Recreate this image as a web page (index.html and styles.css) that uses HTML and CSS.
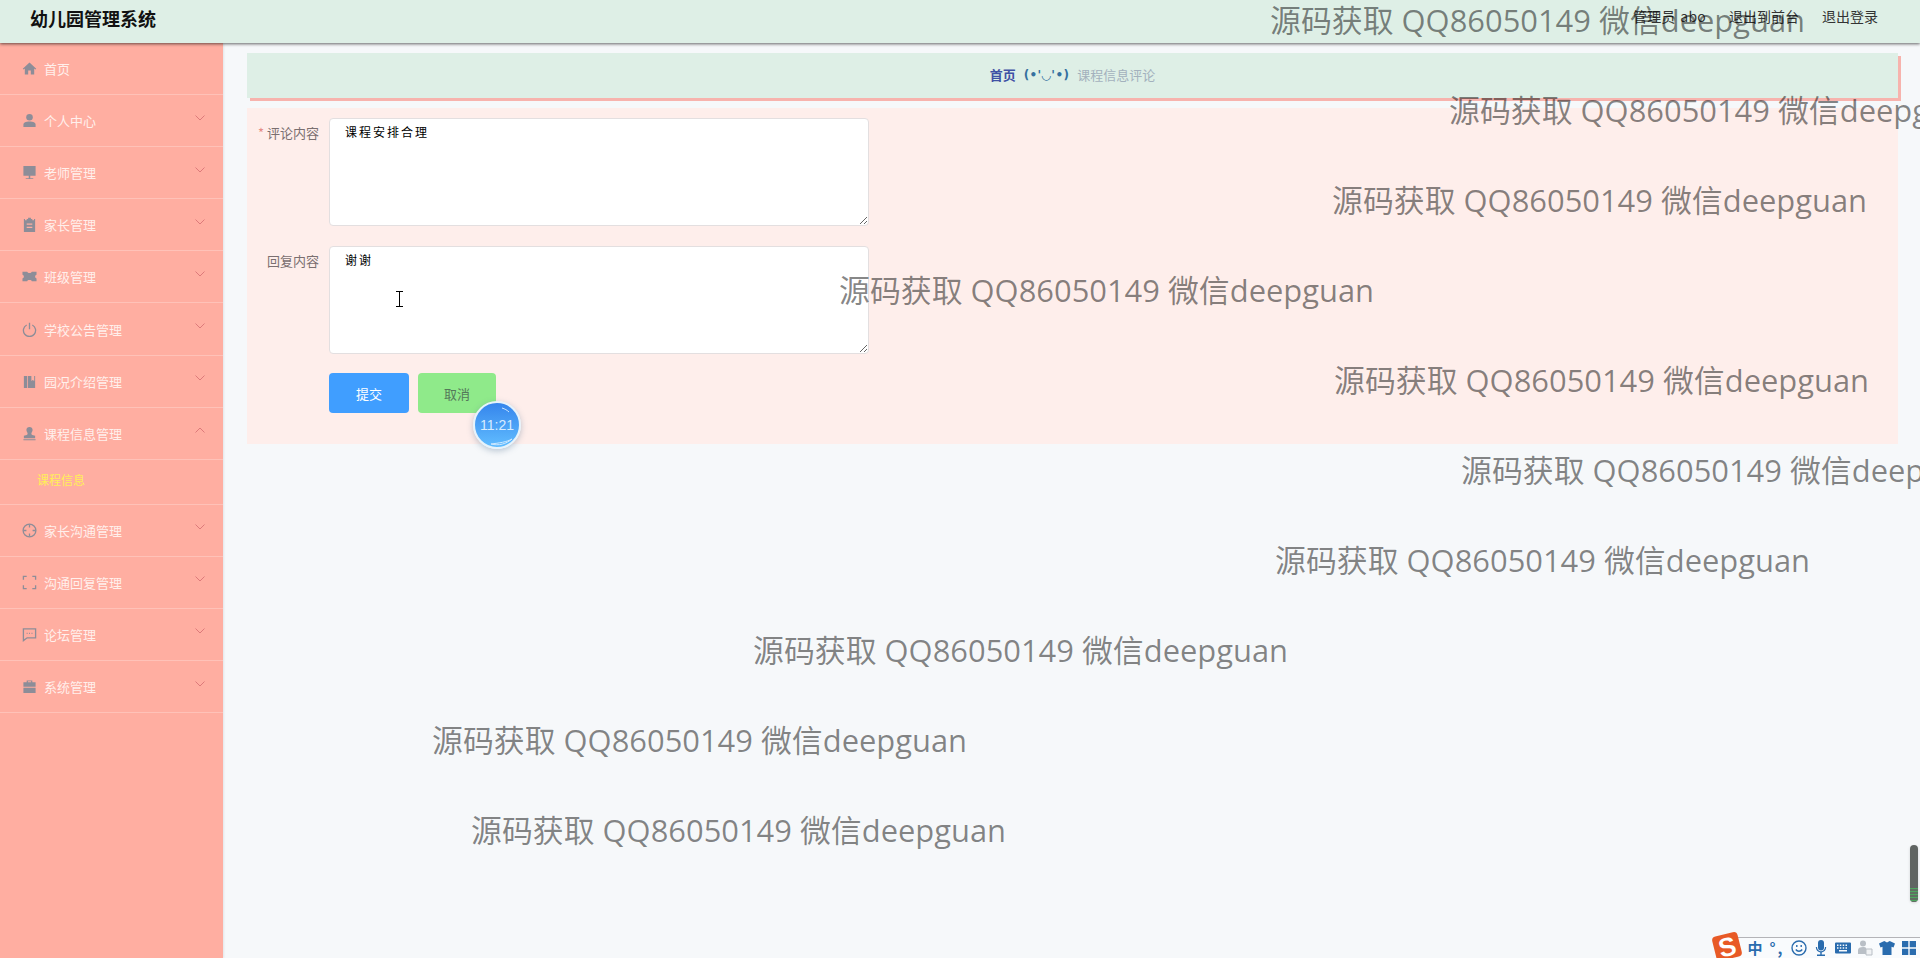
FILE: index.html
```html
<!DOCTYPE html>
<html lang="zh">
<head>
<meta charset="utf-8">
<title>幼儿园管理系统</title>
<link rel="stylesheet" href="styles.css">
</head>
<body>
<header class="topbar">
  <div class="brand">幼儿园管理系统</div>
  <nav class="topnav">
    <span class="topnav-user">管理员 abo</span>
    <span>退出到前台</span>
    <span>退出登录</span>
  </nav>
</header>
<div class="shell">
  <aside class="sidebar">
    <div class="item"><svg class="ico" viewBox="0 0 16 16"><path d="M8 1.5 .8 8.2l1 .9L3 8v6.5h3.6V10h2.8v4.500H13V8l1.200 1.100 1-.9z"/></svg><span>首页</span></div>
    <div class="item"><svg class="ico" viewBox="0 0 16 16"><circle cx="8" cy="4.600" r="3.500"/><path d="M1.500 15v-2.500C1.500 10 4 9 8 9s6.500 1 6.500 3.500V15z"/></svg><span>个人中心</span><svg class="chev" viewBox="0 0 10 6"><path d="M.5.500 5 5 9.500.500"/></svg></div>
    <div class="item"><svg class="ico" viewBox="0 0 16 16"><path d="M1.500 1h13v10.500h-13zM7.200 11.500h1.600V14H12v1H4v-1h3.200z"/></svg><span>老师管理</span><svg class="chev" viewBox="0 0 10 6"><path d="M.5.500 5 5 9.500.500"/></svg></div>
    <div class="item"><svg class="ico" viewBox="0 0 16 16"><path d="M5 2h1.500V.8h3V2H11v1.500h1.800V2H14v14H2V2h1.200v1.500H5zM5 7v1.300h6V7zm0 3.500v1.300h6v-1.300z" fill-rule="evenodd"/></svg><span>家长管理</span><svg class="chev" viewBox="0 0 10 6"><path d="M.5.500 5 5 9.500.500"/></svg></div>
    <div class="item"><svg class="ico" viewBox="0 0 16 16"><path d="M.5 3h5c.4.800.9 1.200 1.500 1.200h2c.6 0 1.100-.4 1.500-1.200h5v3c-1 .3-1.500 1-1.500 2s.5 1.700 1.500 2v3h-5c-.4-.8-.9-1.200-1.500-1.200H7c-.6 0-1.100.4-1.500 1.200h-5v-3c1-.3 1.500-1 1.500-2S1.500 6.300.5 6z"/></svg><span>班级管理</span><svg class="chev" viewBox="0 0 10 6"><path d="M.5.500 5 5 9.500.500"/></svg></div>
    <div class="item"><svg class="ico ico-line" viewBox="0 0 16 16"><path d="M5 3.200a6.500 6.500 0 1 0 6 0M8 .8v7"/></svg><span>学校公告管理</span><svg class="chev" viewBox="0 0 10 6"><path d="M.5.500 5 5 9.500.500"/></svg></div>
    <div class="item"><svg class="ico" viewBox="0 0 16 16"><path d="M2 2h3.500v13H2zM6.300 2H10v5.500l1.500-1 1.500 1V2h1v13H6.300z"/></svg><span>园况介绍管理</span><svg class="chev" viewBox="0 0 10 6"><path d="M.5.500 5 5 9.500.500"/></svg></div>
    <div class="item"><svg class="ico" viewBox="0 0 16 16"><path d="M8 1c2 0 3.300 1.400 3.300 3.200 0 1.800-1.300 2.500-1.300 4 0 .6.300 1 1 1.300l3 1V13H2v-2.500l3-1c.7-.3 1-.7 1-1.300 0-1.500-1.300-2.200-1.300-4C4.700 2.400 6 1 8 1zM1.500 14h13v1.300h-13z"/></svg><span>课程信息管理</span><svg class="chev" viewBox="0 0 10 6"><path d="M.5 5.500 5 1l4.500 4.500"/></svg></div>
    <div class="subitem"><span>课程信息</span></div>
    <div class="item"><svg class="ico ico-line" viewBox="0 0 16 16"><circle cx="8" cy="8" r="6.800"/><path d="M8 1.500v3.200M8 11.300v3.200M1.500 8h3.200M11.300 8h3.200"/></svg><span>家长沟通管理</span><svg class="chev" viewBox="0 0 10 6"><path d="M.5.500 5 5 9.500.500"/></svg></div>
    <div class="item"><svg class="ico ico-line" viewBox="0 0 16 16"><path d="M1.500 5V1.500H5M11 1.500h3.500V5M14.500 11v3.500H11M5 14.500H1.500V11"/></svg><span>沟通回复管理</span><svg class="chev" viewBox="0 0 10 6"><path d="M.5.500 5 5 9.500.500"/></svg></div>
    <div class="item"><svg class="ico ico-line" viewBox="0 0 16 16"><path d="M1.500 2h13v9.500H5.500l-4 3zM5 6.700h.9M7.600 6.700h.9M10.200 6.700h.9"/></svg><span>论坛管理</span><svg class="chev" viewBox="0 0 10 6"><path d="M.5.500 5 5 9.500.500"/></svg></div>
    <div class="item"><svg class="ico" viewBox="0 0 16 16"><path d="M5 3.500V1.500h6v2h3.500v4.700h-13V3.500zM6.300 3.500h3.400v-1H6.300zM1.500 9.200h13V15h-13z" fill-rule="evenodd"/></svg><span>系统管理</span><svg class="chev" viewBox="0 0 10 6"><path d="M.5.500 5 5 9.500.500"/></svg></div>
  </aside>
  <main class="content">
    <div class="crumbs">
      <span class="crumb-home">首页</span>
      <span class="crumb-sep">(•'◡'•)</span>
      <span class="crumb-cur">课程信息评论</span>
    </div>
    <form class="panel">
      <div class="row">
        <label class="lbl"><span class="req">*</span> 评论内容</label>
        <textarea class="area" readonly>课程安排合理</textarea>
      </div>
      <div class="row row-last">
        <label class="lbl">回复内容</label>
        <textarea class="area" readonly>谢谢</textarea>
      </div>
      <div class="actions">
        <button type="button" class="btn btn-submit">提交</button>
        <button type="button" class="btn btn-cancel">取消</button>
      </div>
    </form>
  </main>
</div>

<svg class="ibeam" viewBox="0 0 9 16"><path d="M1 .5h7M1 15.500h7M4.500 .5v15"/></svg>

<div class="clock">
  <svg class="clock-gloss" viewBox="0 0 44 44"><path d="M27 5c3 1 5 2 7 4"/><path d="M16 41c8 2 15 0 21-5-5 3-13 4-21 5z"/></svg>
  <span>11:21</span>
</div>

<div class="meter"><div class="meter-level"></div></div>

<div class="ime">
  <div class="ime-logo"><span>S</span></div>
  <span class="ime-cell ime-zh">中</span>
  <span class="ime-cell ime-punct">°,</span>
  <span class="ime-cell"><svg class="ime-ico ime-line" viewBox="0 0 16 16"><circle cx="8" cy="8" r="7"/><path d="M4.800 9.500c1.500 2.300 4.900 2.300 6.400 0M5.800 5v2M10.200 5v2"/></svg></span>
  <span class="ime-cell"><svg class="ime-ico ime-solid" viewBox="0 0 16 16"><rect x="5" y="0" width="6" height="10.500" rx="3"/><path d="M2.800 7h1.200c0 2.500 1.700 4.300 4 4.300S12 9.500 12 7h1.200c0 3-1.900 5.100-4.500 5.400V14.500H12V16H4v-1.500h3.300v-2.100C4.700 12.100 2.800 10 2.800 7z"/></svg></span>
  <span class="ime-cell"><svg class="ime-ico ime-solid" viewBox="0 0 16 16"><path fill-rule="evenodd" d="M1 2.500h14a1 1 0 0 1 1 1v9a1 1 0 0 1-1 1H1a1 1 0 0 1-1-1v-9a1 1 0 0 1 1-1zM2 4.500V6h1.500V4.500zm2.800 0V6h1.500V4.500zm2.900 0V6h1.500V4.500zm2.800 0V6H12V4.500zM2 7.300v1.500h1.500V7.300zm2.800 0v1.500h1.500V7.300zm2.900 0v1.500h1.500V7.300zm2.800 0v1.500H12V7.300zM4 10v1.500h8V10z"/></svg></span>
  <span class="ime-cell"><svg class="ime-ico ime-ghost" viewBox="0 0 16 16"><circle cx="6" cy="3.500" r="3"/><path d="M1 14V10c0-2 2-3 5-3 1.500 0 2.500.2 3 .7V14z"/><path class="ime-ghost-box" d="M9 9h6v6H9z"/></svg></span>
  <span class="ime-cell"><svg class="ime-ico ime-solid" viewBox="0 0 16 16"><path d="M5.300 1 8 2.500 10.700 1 16 3.500 14.500 7.500l-2-.7V15h-9V6.800l-2 .7L0 3.500z"/></svg></span>
  <span class="ime-cell"><svg class="ime-ico ime-solid" viewBox="0 0 16 16"><path d="M1 1h6.300v6.300H1zM8.700 1H15v6.300H8.700zM1 8.700h6.300V15H1zM8.700 8.700H15V15H8.700z"/></svg></span>
</div>

<div class="marks">
  <div class="wm wm-1">源码获取 QQ86050149 微信deepguan</div>
  <div class="wm wm-2">源码获取 QQ86050149 微信deepguan</div>
  <div class="wm wm-3">源码获取 QQ86050149 微信deepguan</div>
  <div class="wm wm-4">源码获取 QQ86050149 微信deepguan</div>
  <div class="wm wm-5">源码获取 QQ86050149 微信deepguan</div>
  <div class="wm wm-6">源码获取 QQ86050149 微信deepguan</div>
  <div class="wm wm-7">源码获取 QQ86050149 微信deepguan</div>
  <div class="wm wm-8">源码获取 QQ86050149 微信deepguan</div>
  <div class="wm wm-9">源码获取 QQ86050149 微信deepguan</div>
  <div class="wm wm-10">源码获取 QQ86050149 微信deepguan</div>
</div>
</body>
</html>
```

FILE: styles.css
```css
* { box-sizing: border-box; }
html, body { height: 100%; }
body {
  margin: 0;
  height: 958px;
  overflow: hidden;
  position: relative;
  display: flex;
  flex-direction: column;
  background: #f6f8fa;
  font-family: "Noto Sans CJK SC", "Liberation Sans", sans-serif;
  color: #606266;
}

/* top bar */
.topbar {
  flex: none;
  height: 43px;
  display: flex;
  align-items: center;
  justify-content: space-between;
  padding: 0 42px 8px 30px;
  background: #deefe6;
  box-shadow: 0 1px 3px rgba(0, 0, 0, .6);
  position: relative;
  z-index: 2;
}
.brand { font-size: 18px; font-weight: 700; color: #111; line-height: 24px; }
.topnav { display: flex; gap: 23px; font-size: 14px; line-height: 20px; color: #333; margin-bottom: 3px; }
.topnav-user { word-spacing: 1.500px; letter-spacing: .2px; }

/* layout */
.shell { flex: 1; display: flex; min-height: 0; }

/* sidebar */
.sidebar {
  flex: none;
  width: 223px;
  background: #ffaea1;
  box-shadow: 1px 0 2px rgba(0, 0, 0, .08);
  position: relative;
  z-index: 1;
}
.item {
  height: 52.1px;
  display: flex;
  align-items: center;
  padding: 0 18px 0 22px;
  border-bottom: 1px solid #ffc2b8;
  font-size: 13px;
  color: #fff0ec;
}
.ico { width: 15px; height: 15px; margin-right: 7px; fill: #8d8d98; flex: none; }
.ico-line { fill: none; stroke: #8d8d98; stroke-width: 1.400; }
.chev {
  width: 10px;
  height: 6px;
  margin-left: auto;
  margin-bottom: 6px;
  fill: none;
  stroke: #dd7a7a;
  stroke-width: 1;
}
.subitem {
  height: 45px;
  display: flex;
  align-items: center;
  padding: 0 0 4px 37px;
  border-bottom: 1px solid #ffc2b8;
  font-size: 12px;
  color: #ffee58;
}

/* content */
.content { flex: 1; min-width: 0; padding: 10px 22px 0 24px; }
.crumbs {
  height: 45px;
  display: flex;
  align-items: center;
  justify-content: center;
  gap: 8px;
  margin-bottom: 10px;
  padding: 0 0 2px 0;
  background: #deefe6;
  box-shadow: 3px 3px 0 #f7b3ad;
  font-size: 13px;
}
.crumb-home { color: #3f51a5; font-weight: 700; }
.crumb-sep { color: #35709f; font-weight: 700; font-family: "DejaVu Sans", sans-serif; font-size: 12px; letter-spacing: .4px; }
.crumb-cur { color: #a3b1bd; }

.panel {
  height: 336px;
  padding: 10px 0 0 0;
  background: #feeeeb;
}
.row { display: flex; margin-bottom: 20px; }
.row-last { margin-bottom: 19px; }
.lbl {
  flex: none;
  width: 72px;
  margin-right: 10px;
  text-align: right;
  font-size: 13px;
  line-height: 30px;
  color: #7a6f70;
}
.req { color: #e58a85; }
.area {
  display: block;
  width: 540px;
  height: 108px;
  padding: 4px 15px;
  border: 1px solid #e3dfe0;
  border-radius: 4px;
  background: #fff;
  outline: none;
  font-family: "Noto Sans CJK SC", sans-serif;
  font-size: 12px;
  line-height: 17px;
  letter-spacing: 2px;
  color: #000;
}
.actions { display: flex; gap: 9px; padding: 0 0 0 82px; }
.btn {
  height: 40px;
  border: 0;
  border-radius: 4px;
  font-family: inherit;
  font-size: 13px;
}
.btn-submit { width: 80px; background: #409eff; color: #fff; }
.btn-cancel { width: 78px; background: #8fea8a; color: #55785a; }

/* overlays */
.ibeam {
  position: absolute;
  left: 395px;
  top: 291px;
  width: 9px;
  height: 16px;
  fill: none;
  stroke: #000;
  stroke-width: 1;
}
.clock {
  position: absolute;
  left: 473px;
  top: 401px;
  width: 48px;
  height: 48px;
  display: flex;
  align-items: center;
  justify-content: center;
  border: 2px solid #e6f3fb;
  border-radius: 50%;
  background: linear-gradient(#3585ec, #61bdff);
  box-shadow: 0 2px 6px rgba(90, 120, 150, .4);
  font-family: "Liberation Sans", sans-serif;
  font-size: 14px;
  color: #d7ecff;
}
.clock-gloss {
  position: absolute;
  inset: 0;
  fill: none;
  stroke: #cfe9ff;
  stroke-width: 1;
}
.meter {
  position: absolute;
  left: 1910px;
  top: 845px;
  width: 8px;
  height: 57px;
  border-radius: 4px;
  overflow: hidden;
  background: #5f6462;
  box-shadow: 0 1px 3px rgba(0, 0, 0, .15);
}
.meter-level {
  position: absolute;
  left: 0;
  right: 0;
  bottom: 0;
  height: 14px;
  background: repeating-linear-gradient(#4ea560 0 1px, #5f6f62 1px 3px);
}
.ime {
  position: absolute;
  right: 0;
  bottom: 0;
  width: 182px;
  height: 21px;
  display: flex;
  align-items: center;
  padding-left: 6px;
  border-top: 1px solid #b4b4b8;
  background: #f9fbfd;
}
.ime-logo {
  position: absolute;
  left: -24px;
  top: -4px;
  width: 26px;
  height: 25px;
  display: flex;
  align-items: center;
  justify-content: center;
  border-radius: 4px;
  background: #e85a26;
  transform: rotate(-14deg);
  font-family: "Liberation Sans", sans-serif;
  font-size: 26px;
  font-weight: 700;
  line-height: 1;
  color: #fff;
}
.ime-cell {
  flex: none;
  width: 22px;
  display: flex;
  align-items: center;
  justify-content: center;
  color: #2a6cae;
}
.ime-zh { font-size: 15px; font-weight: 700; line-height: 20px; }
.ime-punct { font-size: 15px; font-weight: 700; line-height: 20px; letter-spacing: 2px; }
.ime-ico { width: 16px; height: 16px; }
.ime-line { fill: none; stroke: #2a6cae; stroke-width: 1.400; }
.ime-solid { fill: #2a6cae; }
.ime-ghost { fill: #b9bfc6; }
.ime-ghost-box { fill: #f0f2f4; stroke: #b9bfc6; stroke-width: 1; }

/* watermark */
.marks {
  position: absolute;
  inset: 0;
  overflow: hidden;
  pointer-events: none;
  z-index: 5;
}
.wm {
  position: absolute;
  white-space: nowrap;
  font-family: "Open Sans", "Noto Sans CJK SC", sans-serif;
  font-size: 30.9px;
  font-weight: 400;
  line-height: 40px;
  color: rgba(0, 0, 0, .48);
}
.wm-1 { left: 1270px; top: 0; }
.wm-2 { left: 1449px; top: 90px; }
.wm-3 { left: 1332px; top: 180px; }
.wm-4 { left: 839px; top: 270px; }
.wm-5 { left: 1334px; top: 360px; }
.wm-6 { left: 1461px; top: 450px; }
.wm-7 { left: 1275px; top: 540px; }
.wm-8 { left: 753px; top: 630px; }
.wm-9 { left: 432px; top: 720px; }
.wm-10 { left: 471px; top: 810px; }
```
